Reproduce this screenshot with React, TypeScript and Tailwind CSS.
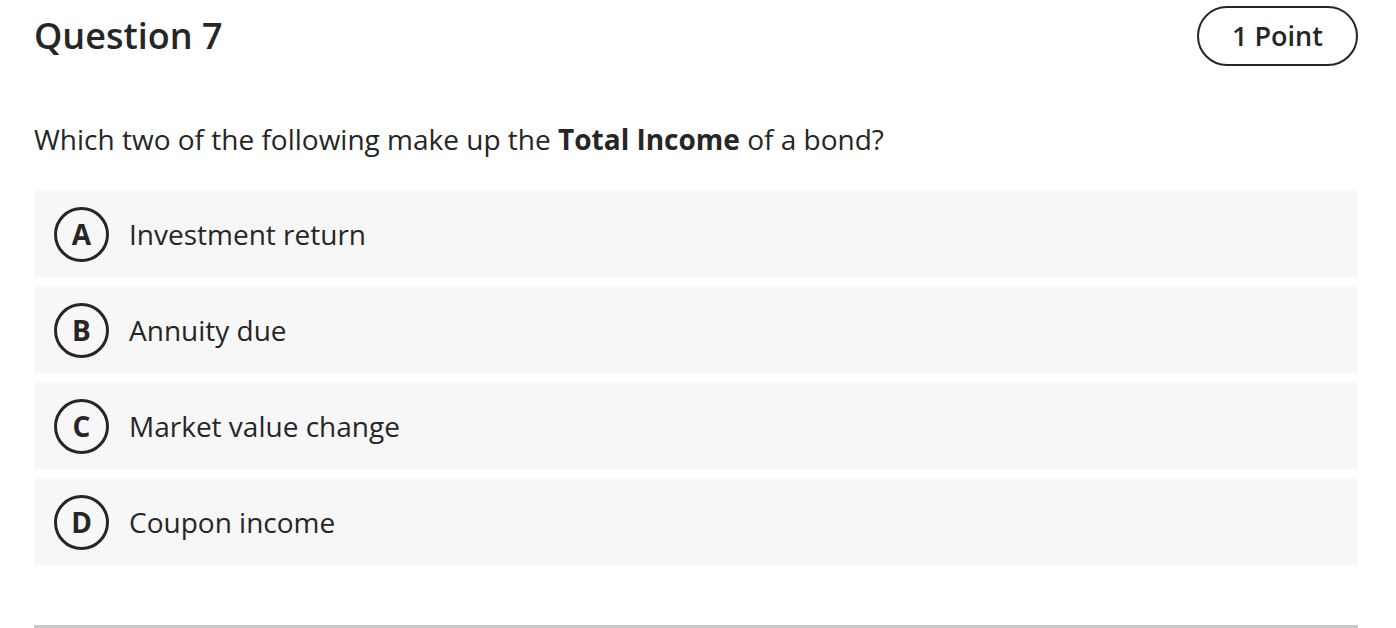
import React from 'react';

const options = [
  { letter: 'A', text: 'Investment return' },
  { letter: 'B', text: 'Annuity due' },
  { letter: 'C', text: 'Market value change' },
  { letter: 'D', text: 'Coupon income' },
];

export default function App() {
  return (
    <div className="min-h-screen bg-white pl-[34px] pr-[38px] pt-[6px] text-[#262626] font-['Open_Sans',sans-serif]">
      <div className="flex h-[60px] items-center justify-between">
        <h1 className="text-[36px] font-semibold leading-none">Question 7</h1>
        <div className="flex h-[60px] w-[161px] items-center justify-center rounded-full border-2 border-[#262626] text-[27px] font-semibold">
          1 Point
        </div>
      </div>

      <p className="mt-[52px] text-[28px] leading-[42px]">
        Which two of the following make up the <span className="font-bold">Total Income</span> of a bond?
      </p>

      <div className="mt-[30px] flex flex-col gap-2">
        {options.map((o) => (
          <div
            key={o.letter}
            className="flex h-[88px] items-center gap-5 rounded-[5px] bg-[#f7f7f7] pl-5"
          >
            <div className="flex h-[55px] w-[55px] items-center justify-center rounded-full border-[3px] border-[#262626] text-[28px] font-bold leading-none">
              {o.letter}
            </div>
            <span className="text-[28px]">{o.text}</span>
          </div>
        ))}
      </div>

      <div className="mt-[59px] h-[3px] bg-[#c8c8c8]" />
    </div>
  );
}
